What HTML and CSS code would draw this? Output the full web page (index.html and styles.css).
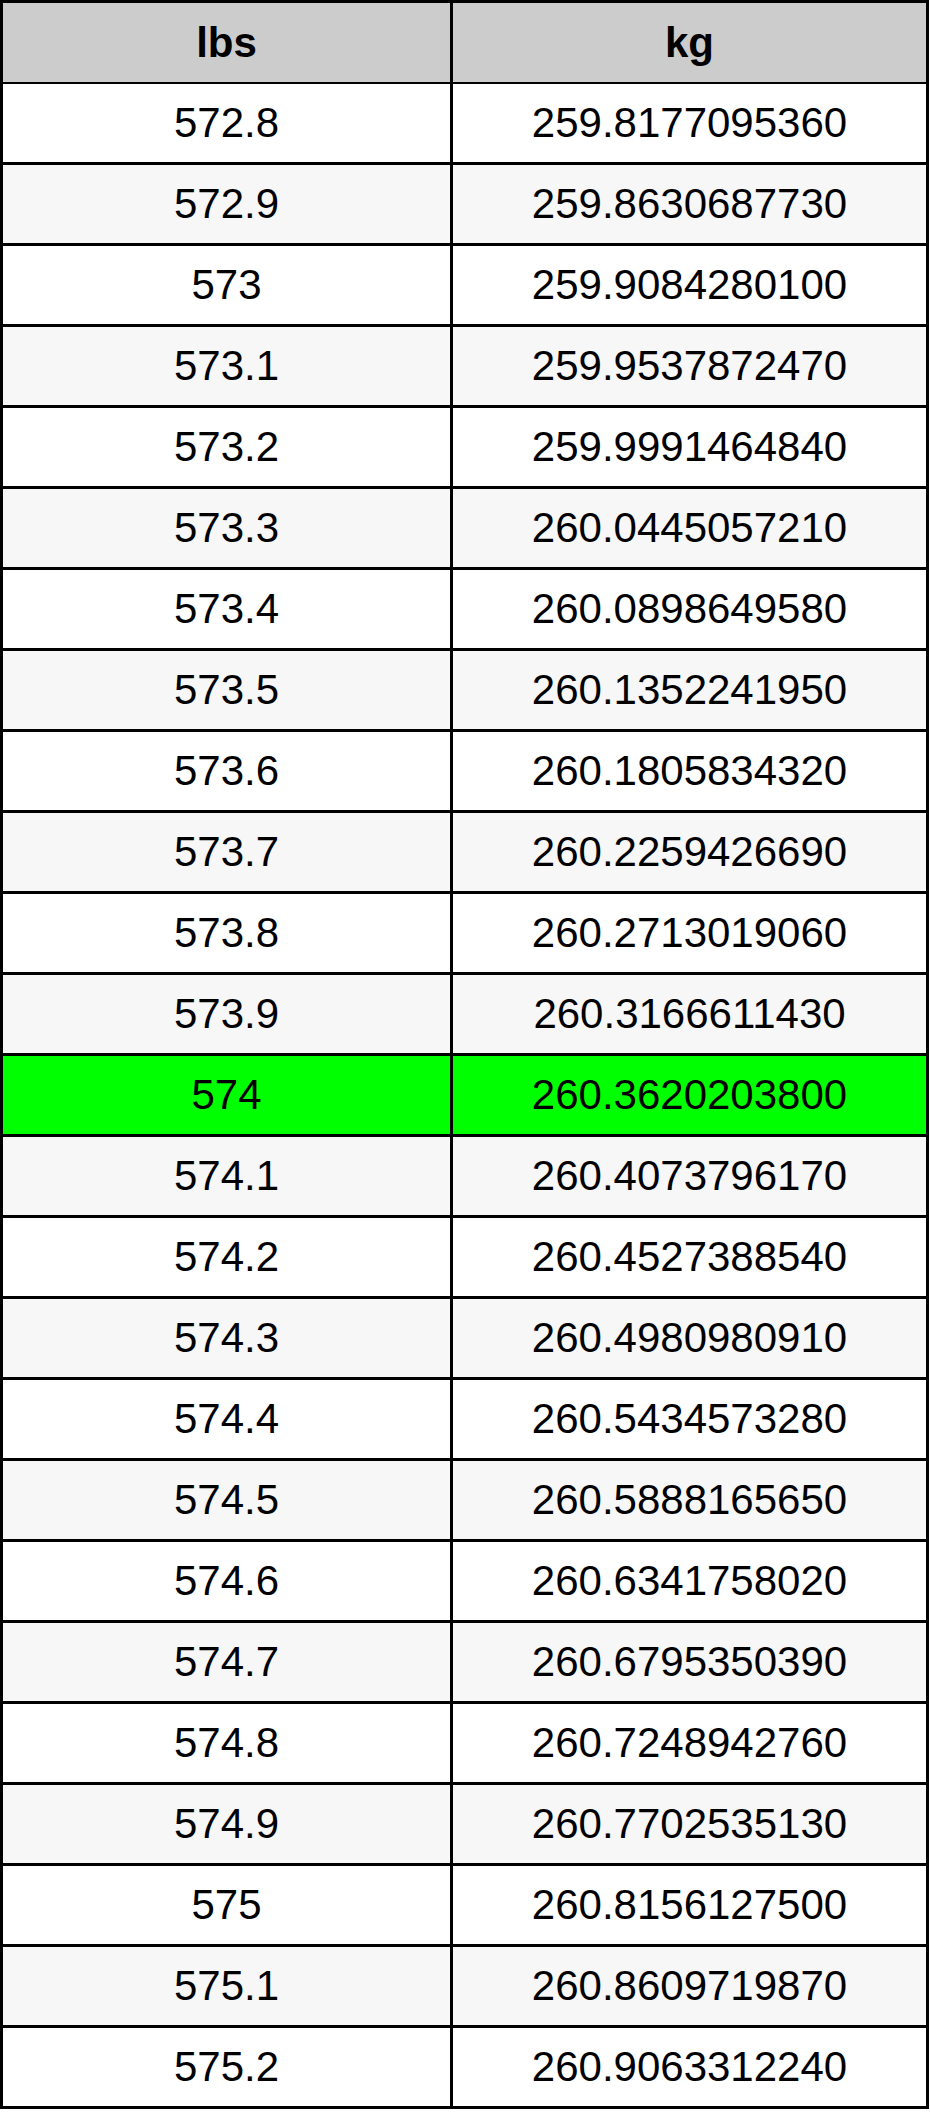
FILE: index.html
```html
<!DOCTYPE html>
<html>
<head>
<meta charset="utf-8">
<link rel="stylesheet" href="styles.css">
</head>
<body>
<div class="table">
  <div class="cell head">lbs</div><div class="cell head">kg</div>
  <div class="cell">572.8</div><div class="cell">259.8177095360</div>
  <div class="cell alt">572.9</div><div class="cell alt">259.8630687730</div>
  <div class="cell">573</div><div class="cell">259.9084280100</div>
  <div class="cell alt">573.1</div><div class="cell alt">259.9537872470</div>
  <div class="cell">573.2</div><div class="cell">259.9991464840</div>
  <div class="cell alt">573.3</div><div class="cell alt">260.0445057210</div>
  <div class="cell">573.4</div><div class="cell">260.0898649580</div>
  <div class="cell alt">573.5</div><div class="cell alt">260.1352241950</div>
  <div class="cell">573.6</div><div class="cell">260.1805834320</div>
  <div class="cell alt">573.7</div><div class="cell alt">260.2259426690</div>
  <div class="cell">573.8</div><div class="cell">260.2713019060</div>
  <div class="cell alt">573.9</div><div class="cell alt">260.3166611430</div>
  <div class="cell hl">574</div><div class="cell hl">260.3620203800</div>
  <div class="cell alt">574.1</div><div class="cell alt">260.4073796170</div>
  <div class="cell">574.2</div><div class="cell">260.4527388540</div>
  <div class="cell alt">574.3</div><div class="cell alt">260.4980980910</div>
  <div class="cell">574.4</div><div class="cell">260.5434573280</div>
  <div class="cell alt">574.5</div><div class="cell alt">260.5888165650</div>
  <div class="cell">574.6</div><div class="cell">260.6341758020</div>
  <div class="cell alt">574.7</div><div class="cell alt">260.6795350390</div>
  <div class="cell">574.8</div><div class="cell">260.7248942760</div>
  <div class="cell alt">574.9</div><div class="cell alt">260.7702535130</div>
  <div class="cell">575</div><div class="cell">260.8156127500</div>
  <div class="cell alt">575.1</div><div class="cell alt">260.8609719870</div>
  <div class="cell">575.2</div><div class="cell">260.9063312240</div>
</div>
</body>
</html>
```
FILE: styles.css
```css
html, body {
  margin: 0;
  padding: 0;
  background: #ffffff;
}
.table {
  display: grid;
  grid-template-columns: 447px 473px;
  grid-auto-rows: 78px;
  gap: 3px;
  padding: 3px;
  width: 929px;
  box-sizing: border-box;
  background: #000000;
  font-family: "Liberation Sans", Arial, sans-serif;
  font-size: 42px;
  color: #000000;
}
.cell {
  display: flex;
  align-items: center;
  justify-content: center;
  background: #ffffff;
}
.cell.head {
  background: #cccccc;
  font-weight: bold;
  height: 79px;
}
.cell.alt {
  background: #f7f7f7;
}
.cell.hl {
  background: #00ff00;
}
```
